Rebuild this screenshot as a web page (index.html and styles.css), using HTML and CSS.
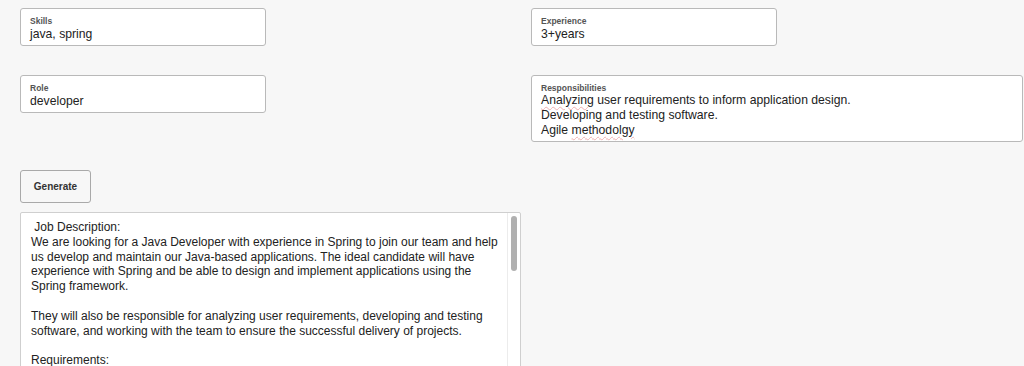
FILE: index.html
```html
<!DOCTYPE html>
<html>
<head>
<meta charset="utf-8">
<link rel="stylesheet" href="styles.css">
</head>
<body>
<div class="page">
  <div class="row row-top">
    <div class="col-left">
      <div class="field field-short">
        <div class="label">Skills</div>
        <div class="value">java, spring</div>
      </div>
    </div>
    <div class="col-right">
      <div class="field field-short">
        <div class="label">Experience</div>
        <div class="value">3+years</div>
      </div>
    </div>
  </div>
  <div class="row row-second">
    <div class="col-left">
      <div class="field field-short">
        <div class="label">Role</div>
        <div class="value">developer</div>
      </div>
    </div>
    <div class="col-right">
      <div class="field field-wide">
        <div class="label">Responsibilities</div>
        <div class="value multi"><span class="spell">Analyzing</span> user requirements to inform application design.<br>Developing and testing software.<br>Agile <span class="spell">methodolgy</span></div>
      </div>
    </div>
  </div>
  <button class="generate">Generate</button>
  <div class="output">
    <div class="output-text">&nbsp;Job Description:<br>We are looking for a Java Developer with experience in Spring to join our team and help us develop and maintain our Java-based applications. The ideal candidate will have experience with Spring and be able to design and implement applications using the Spring framework.<br><br>They will also be responsible for analyzing user requirements, developing and testing software, and working with the team to ensure the successful delivery of projects.<br><br>Requirements:</div>
    <div class="scrollbar"><div class="thumb"></div></div>
  </div>
</div>
</body>
</html>
```
FILE: styles.css
```css
html, body {
  margin: 0;
  padding: 0;
  background: #f7f7f7;
  height: 366px;
  overflow: hidden;
}
body {
  font-family: "Liberation Sans", Arial, sans-serif;
  color: #222;
}
.page {
  padding: 8px 0 0 20px;
  display: flex;
  flex-direction: column;
}
.row {
  display: grid;
  grid-template-columns: 511px 493px;
}
.row-second {
  margin-top: 29px;
}
.field {
  box-sizing: border-box;
  background: #fff;
  border: 1px solid #b9b9b9;
  border-radius: 3px;
  padding: 7px 9px 0 9px;
}
.field-short {
  width: 246px;
  height: 38px;
}
.field-wide {
  width: 492px;
  height: 67px;
}
.label {
  font-size: 8.5px;
  font-weight: bold;
  color: #555;
  line-height: 11px;
}
.value {
  font-size: 12.2px;
  line-height: 15px;
  color: #222;
}
.multi {
  margin-top: -1px;
}
.spell {
  text-decoration: underline wavy #f0b0b0;
  text-decoration-thickness: 1px;
  text-underline-offset: 2px;
}
.generate {
  align-self: flex-start;
  margin-top: 28px;
  width: 71px;
  height: 33px;
  box-sizing: border-box;
  background: #f7f7f7;
  border: 1px solid #a9a9a9;
  border-radius: 3px;
  font-family: "Liberation Sans", Arial, sans-serif;
  font-size: 10px;
  font-weight: bold;
  color: #333;
  padding: 0;
}
.output {
  margin-top: 9px;
  width: 501px;
  height: 170px;
  box-sizing: border-box;
  background: #fff;
  border: 1px solid #cfcfcf;
  border-radius: 2px;
  display: flex;
}
.output-text {
  flex: 1;
  padding: 7px 0 0 10px;
  font-size: 12px;
  line-height: 14.8px;
  color: #222;
}
.scrollbar {
  width: 12px;
  border-left: 1px solid #ececec;
  padding-top: 3px;
  display: flex;
  justify-content: center;
}
.thumb {
  width: 6px;
  height: 55px;
  background: #b0b0b0;
  border-radius: 3px;
}
```
